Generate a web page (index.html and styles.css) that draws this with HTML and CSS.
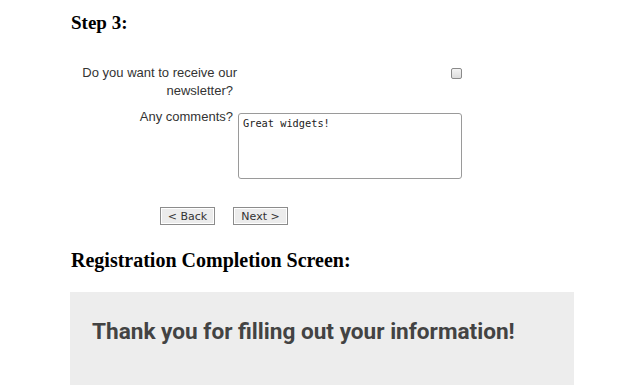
FILE: index.html
```html
<!DOCTYPE html>
<html lang="en">
<head>
    <meta charset="UTF-8">
    <meta name="viewport" content="width=device-width, initial-scale=1.0">
    <title>Registration Steps</title>
    <link rel="stylesheet" href="styles.css">
</head>
<body>

    <div class="page">
        <h2 class="step-title">Step 3:</h2>

        <!-- Step 3 form -->
        <div class="form-shot">
            <div class="form-grid">
                <label class="form-label" for="newsletter"><span class="first-line">Do you want to receive our</span><br>newsletter?</label>
                <input class="check" type="checkbox" id="newsletter">

                <label class="form-label" for="comments">Any comments?</label>
                <textarea class="comments" id="comments">Great widgets!</textarea>
            </div>
            <div class="form-buttons">
                <button class="btn">&lt; Back</button>
                <button class="btn">Next &gt;</button>
            </div>
        </div>

        <h2 class="step-title completion">Registration Completion Screen:</h2>

        <div class="done-box">
            <p>Thank you for filling out your information!</p>
        </div>
    </div>

</body>
</html>
```

FILE: styles.css
```css
body {
    margin: 0;
    background: #ffffff;
    font-family: 'Liberation Serif', serif;
    color: #000000;
}

.page {
    padding: 12px 0 0 70px;
}

.step-title {
    margin: 0;
    padding-left: 1px;
    font-size: 19px;
    line-height: 22px;
    font-weight: bold;
}

.form-shot {
    margin-top: 30px;
    width: 410px;
    font-family: 'Liberation Sans', Arial, sans-serif;
}

.form-grid {
    display: grid;
    grid-template-columns: 163px 224px;
    column-gap: 5px;
    row-gap: 8px;
}

.form-label {
    text-align: right;
    font-size: 13px;
    line-height: 18px;
    color: #333333;
}

.first-line {
    margin-right: -4px;
}

.check {
    justify-self: end;
    align-self: start;
    width: 11px;
    height: 11px;
    margin: 4px 0 0 0;
    appearance: none;
    border: 1px solid #8a8a8a;
    border-radius: 2px;
    background: linear-gradient(#f4f4f4, #dcdcdc);
}

.comments {
    margin: 5px 0 0 0;
    width: 224px;
    height: 66px;
    box-sizing: border-box;
    padding: 3px 4px;
    border: 1px solid #9a9a9a;
    border-radius: 3px;
    resize: none;
    font-family: 'DejaVu Sans Mono', monospace;
    font-size: 10.3px;
    line-height: 12px;
    color: #222222;
}

.form-buttons {
    display: flex;
    gap: 18px;
    margin-top: 28px;
    padding-left: 90px;
}

.btn {
    width: 55px;
    height: 18px;
    padding: 0;
    border: 1px solid #8c8c8c;
    border-radius: 0;
    background: #ececec;
    box-shadow: inset 0 0 0 1px #ffffff;
    font-family: 'DejaVu Sans', sans-serif;
    font-size: 11px;
    color: #333333;
}

.completion {
    margin-top: 24px;
    font-size: 20px;
}

.done-box {
    margin-top: 21px;
    width: 504px;
    height: 100px;
    background: #ededed;
}

.done-box p {
    margin: 0;
    padding: 26px 0 0 22px;
    font-family: Roboto, sans-serif;
    font-size: 22.6px;
    line-height: 28px;
    font-weight: bold;
    color: #434343;
}
```
